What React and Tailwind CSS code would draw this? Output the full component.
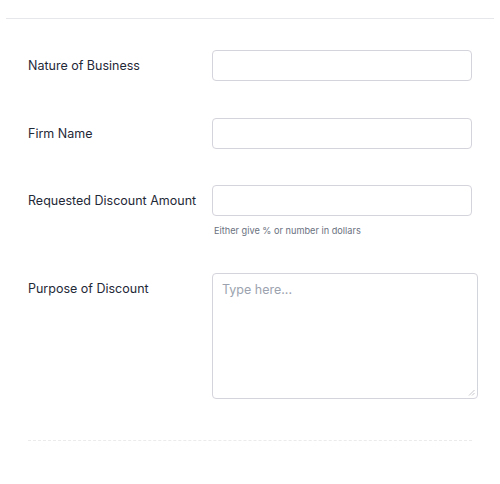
export default function App() {
  const font = { fontFamily: 'Inter, "Liberation Sans", sans-serif' };
  const inputCls =
    "block h-[31px] w-[260px] shrink-0 rounded-[4px] border border-[#d4d4dc] bg-white px-[10px] text-[13px] text-[#1f2937] outline-none";
  const labelCls =
    "flex h-[31px] w-[184px] shrink-0 items-center pt-[2px] text-[12.5px] text-[#1f2937]";

  return (
    <div className="min-h-[484px] w-[500px] bg-white pt-[18px]" style={font}>
      <div className="mx-[6px] border-t border-[#e5e7eb]" />

      <div className="px-[28px] pt-[31px]">
        <div className="flex">
          <label className={labelCls}>Nature of Business</label>
          <input type="text" className={inputCls} />
        </div>

        <div className="mt-[37px] flex">
          <label className={labelCls}>Firm Name</label>
          <input type="text" className={inputCls} />
        </div>

        <div className="mt-[36px] flex">
          <label className={labelCls}>Requested Discount Amount</label>
          <div className="shrink-0">
            <input type="text" className={inputCls} />
            <p className="ml-[2px] mt-[9px] text-[9.2px] leading-[12px] text-[#6b7280]">
              Either give % or number in dollars
            </p>
          </div>
        </div>

        <div className="mt-[36px] flex">
          <label className={labelCls}>Purpose of Discount</label>
          <div className="relative shrink-0">
            <textarea
              placeholder="Type here..."
              className="block h-[126px] w-[266px] resize-none rounded-[4px] border border-[#d4d4dc] bg-white px-[9px] py-[7px] text-[12.5px] text-[#1f2937] outline-none placeholder:text-[#9ca3af]"
            />
            {/* resize grip */}
            <svg
              className="pointer-events-none absolute bottom-[3px] right-[3px]"
              width="7"
              height="7"
              viewBox="0 0 7 7"
            >
              <path d="M6.5 1 L1 6.5 M6.5 4 L4 6.5" stroke="#b8b8c0" strokeWidth="0.8" />
            </svg>
          </div>
        </div>

        <div className="mt-[41px] border-t border-dashed border-[#ebebeb]" />
      </div>
    </div>
  );
}
